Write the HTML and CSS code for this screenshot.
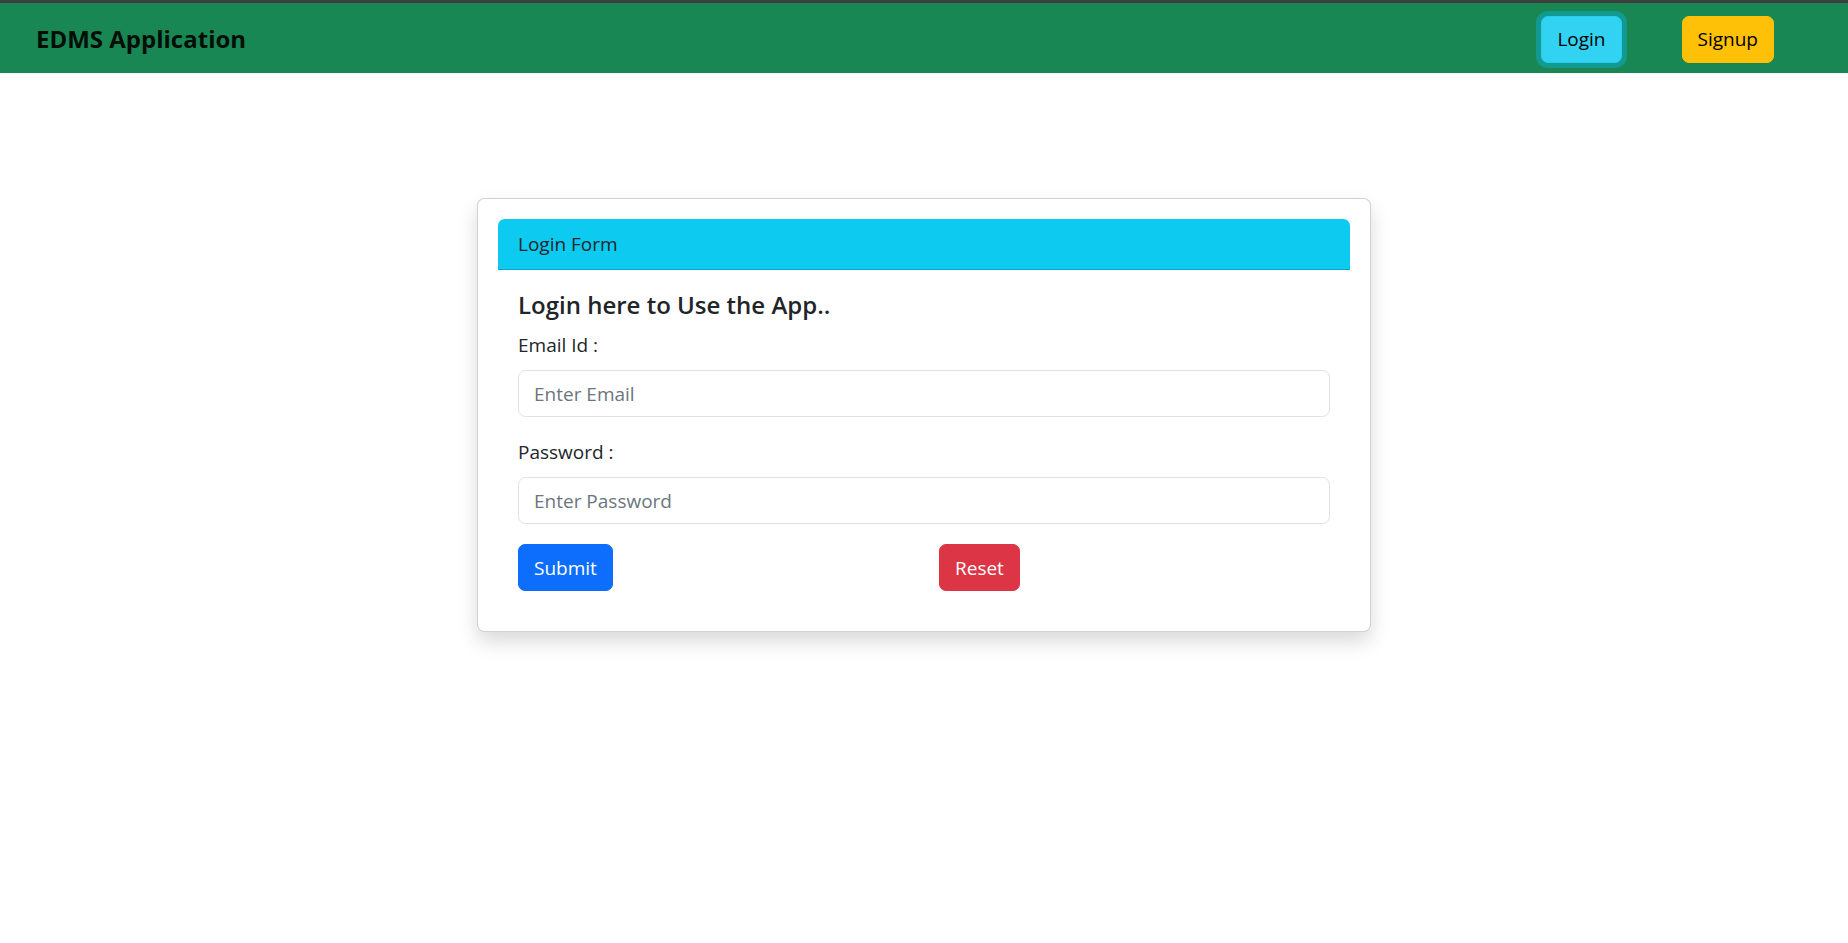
FILE: index.html
```html
<!DOCTYPE html>
<html lang="en">
<head>
<meta charset="utf-8">
<title>EDMS Application</title>
<link rel="stylesheet" href="styles.css">
</head>
<body>
<nav class="navbar">
  <a class="brand" href="#">EDMS Application</a>
  <div class="nav-actions">
    <button class="btn btn-info focused">Login</button>
    <button class="btn btn-warning">Signup</button>
  </div>
</nav>
<main class="page">
  <div class="card">
    <div class="card-header">Login Form</div>
    <form class="card-body">
      <h5 class="title">Login here to Use the App..</h5>
      <div class="field">
        <label class="label" for="email">Email Id :</label>
        <input class="input" id="email" type="email" placeholder="Enter Email">
      </div>
      <div class="field">
        <label class="label" for="password">Password :</label>
        <input class="input" id="password" type="password" placeholder="Enter Password">
      </div>
      <div class="actions">
        <div><button type="button" class="btn btn-primary">Submit</button></div>
        <div><button type="reset" class="btn btn-danger">Reset</button></div>
      </div>
    </form>
  </div>
</main>
</body>
</html>
```
FILE: styles.css
```css
* { box-sizing: border-box; }
html, body { margin: 0; padding: 0; background: #fff; }
body {
  font-family: "Open Sans", "Noto Sans", "Liberation Sans", sans-serif;
  font-size: 19px;
  line-height: 30px;
  color: #212529;
  min-height: 943px;
}
.navbar {
  display: flex;
  align-items: center;
  justify-content: space-between;
  background: #198754;
  border-top: 3px solid #3d3d3d;
  height: 73px;
  padding: 2px 74px 0 36px;
}
.brand {
  color: #040d08;
  font-weight: 700;
  font-size: 24px;
  text-decoration: none;
  line-height: 36px;
}
.nav-actions {
  display: flex;
  align-items: center;
  gap: 60px;
}
.btn {
  font-family: inherit;
  font-size: 19px;
  line-height: 30px;
  height: 47px;
  padding: 7.5px 15px;
  border: 1px solid transparent;
  border-radius: 7px;
  cursor: pointer;
  display: inline-block;
}
.btn-info { background: #31d2f2; border-color: #25cff2; color: #000; }
.btn-info.focused { box-shadow: 0 0 0 5px #129a90; }
.btn-warning { background: #ffc107; border-color: #ffc107; color: #000; }
.btn-primary { background: #0d6efd; border-color: #0d6efd; color: #fff; }
.btn-danger { background: #dc3545; border-color: #dc3545; color: #fff; }

.page {
  padding: 125px 0 120px;
  display: flex;
  justify-content: center;
}
.card {
  width: 894px;
  border: 1px solid rgba(0,0,0,.175);
  border-radius: 7.5px;
  padding: 20px;
  background: #fff;
  box-shadow: 0 10px 20px rgba(0,0,0,.15);
}
.card-header {
  background: #0dcaf0;
  border-bottom: 1px solid rgba(0,0,0,.175);
  border-radius: 6.5px 6.5px 0 0;
  padding: 10px 20px;
  line-height: 30px;
}
.card-body {
  padding: 20px;
  margin: 0;
}
.title {
  margin: 0 0 10px;
  font-size: 24px;
  font-weight: 600;
  line-height: 30px;
}
.field { margin-bottom: 20px; }
.label {
  display: block;
  margin-bottom: 10px;
}
.input {
  display: block;
  width: 100%;
  height: 47px;
  padding: 7.5px 15px;
  font-family: inherit;
  font-size: 19px;
  color: #212529;
  border: 1px solid #dee2e6;
  border-radius: 7.5px;
  background: #fff;
  outline: none;
}
.input::placeholder { color: #6c757d; opacity: 1; }
.actions {
  display: grid;
  grid-template-columns: 1fr 1fr;
  column-gap: 30px;
}
```
